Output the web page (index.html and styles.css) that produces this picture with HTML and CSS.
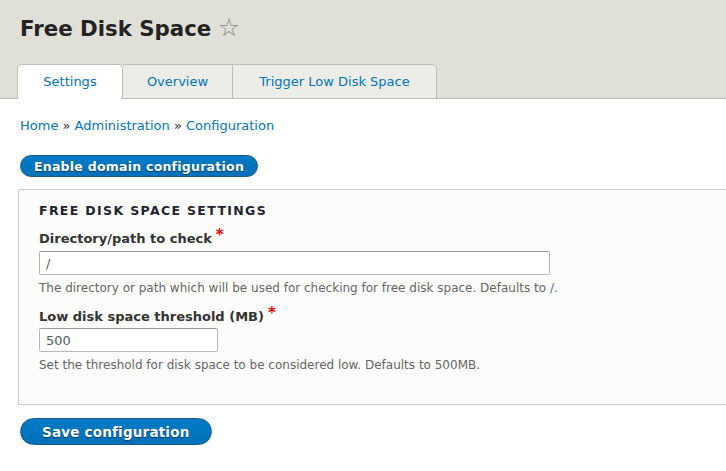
FILE: index.html
```html
<!DOCTYPE html>
<html>
<head>
<meta charset="utf-8">
<link rel="stylesheet" href="styles.css">
</head>
<body>
<header class="header">
  <h1 class="title">Free Disk Space <span class="star">☆</span></h1>
  <nav class="tabs">
    <a class="tab active">Settings</a>
    <a class="tab">Overview</a>
    <a class="tab">Trigger Low Disk Space</a>
  </nav>
</header>
<main class="content">
  <div class="breadcrumb"><a>Home</a> » <a>Administration</a> » <a>Configuration</a></div>
  <div class="row"><button class="btn btn-small">Enable domain configuration</button></div>
  <div class="fieldset">
    <div class="legend">Free Disk Space Settings</div>
    <div class="item">
      <label class="label">Directory/path to check<span class="req">*</span></label>
      <input class="input input-wide" type="text" value="/">
      <div class="desc">The directory or path which will be used for checking for free disk space. Defaults to /.</div>
    </div>
    <div class="item">
      <label class="label">Low disk space threshold (MB)<span class="req">*</span></label>
      <input class="input input-short" type="text" value="500">
      <div class="desc">Set the threshold for disk space to be considered low. Defaults to 500MB.</div>
    </div>
  </div>
  <div class="row"><button class="btn btn-big">Save configuration</button></div>
</main>
</body>
</html>
```

FILE: styles.css
```css
html, body {
  margin: 0;
  padding: 0;
  overflow: hidden;
}
body {
  font-family: "DejaVu Sans", Verdana, sans-serif;
  font-size: 13px;
  color: #333;
  background: #fff;
}
a { color: #0074bd; text-decoration: none; }
.header {
  background: #e0e0d8;
  border-bottom: 1px solid #bfbfba;
  padding: 14px 0 0 17px;
}
.title {
  margin: 0 0 0 3px;
  font-size: 21.3px;
  line-height: 28px;
  font-weight: bold;
  color: #232323;
  height: 50px;
}
.star {
  font-weight: normal;
  color: #8c8c84;
  font-size: 25px;
  margin-left: -1px;
}
.tabs {
  display: flex;
  margin-bottom: -1px;
}
.tab {
  display: block;
  height: 33px;
  line-height: 33px;
  border: 1px solid #bfbfba;
  border-bottom: none;
  background: #ededE7;
  color: #0074bd;
  font-size: 13px;
  text-align: center;
}
.tab + .tab { border-left: none; }
.tab:first-child { border-top-left-radius: 5px; }
.tab:last-child { border-top-right-radius: 5px; }
.tab:nth-child(1) { width: 104px; }
.tab:nth-child(2) { width: 109px; }
.tab:nth-child(3) { width: 203px; }
.tab.active {
  background: #fff;
  height: 34px;
  border-top-right-radius: 5px;
}
.content {
  padding: 18px 0 0 18px;
  margin-right: -20px;
}
.breadcrumb {
  margin-left: 2px;
  line-height: 18px;
  height: 38px;
}
.row { margin-left: 2px; }
.btn {
  font-family: "DejaVu Sans", Verdana, sans-serif;
  font-weight: bold;
  color: #fff;
  background: linear-gradient(#007bc6, #0071b8);
  border: 1px solid #1e5c90;
  border-radius: 20px;
  text-shadow: 0 1px 1px rgba(0,0,0,0.5);
  cursor: pointer;
  display: block;
}
.btn-small {
  font-size: 12.5px;
  height: 22px;
  padding: 0 13px;
  letter-spacing: 0.25px;
}
.btn-big {
  font-size: 13.5px;
  height: 27px;
  padding: 0 21px;
  margin-top: 13px;
  letter-spacing: 0.2px;
}
.fieldset {
  margin-top: 12px;
  border: 1px solid #ccc;
  background: #fcfcfa;
  padding: 13px 20px 18px 20px;
  height: 183px;
}
.legend {
  font-weight: bold;
  text-transform: uppercase;
  letter-spacing: 1.35px;
  font-size: 12.5px;
  line-height: 16px;
  color: #222330;
  margin-bottom: 10px;
}
.item { margin-bottom: 11px; }
.item:last-child .label { margin-bottom: 2px; }
.label {
  display: block;
  font-weight: bold;
  line-height: 18px;
  color: #333;
  margin-bottom: 3px;
}
.req {
  color: #e00;
  margin-left: 4px;
  font-size: 15px;
  position: relative;
  top: -3px;
}
.input {
  display: block;
  box-sizing: border-box;
  height: 24px;
  border: 1px solid #b8b8b8;
  border-top-color: #999;
  border-radius: 2px;
  background: #fff;
  font-family: "DejaVu Sans", Verdana, sans-serif;
  font-size: 13px;
  color: #595959;
  padding: 0 6px;
  margin: 0;
}
.input-wide { width: 511px; }
.input-short { width: 179px; }
.desc {
  font-size: 12px;
  color: #666;
  line-height: 16px;
  margin-top: 5px;
}
```
